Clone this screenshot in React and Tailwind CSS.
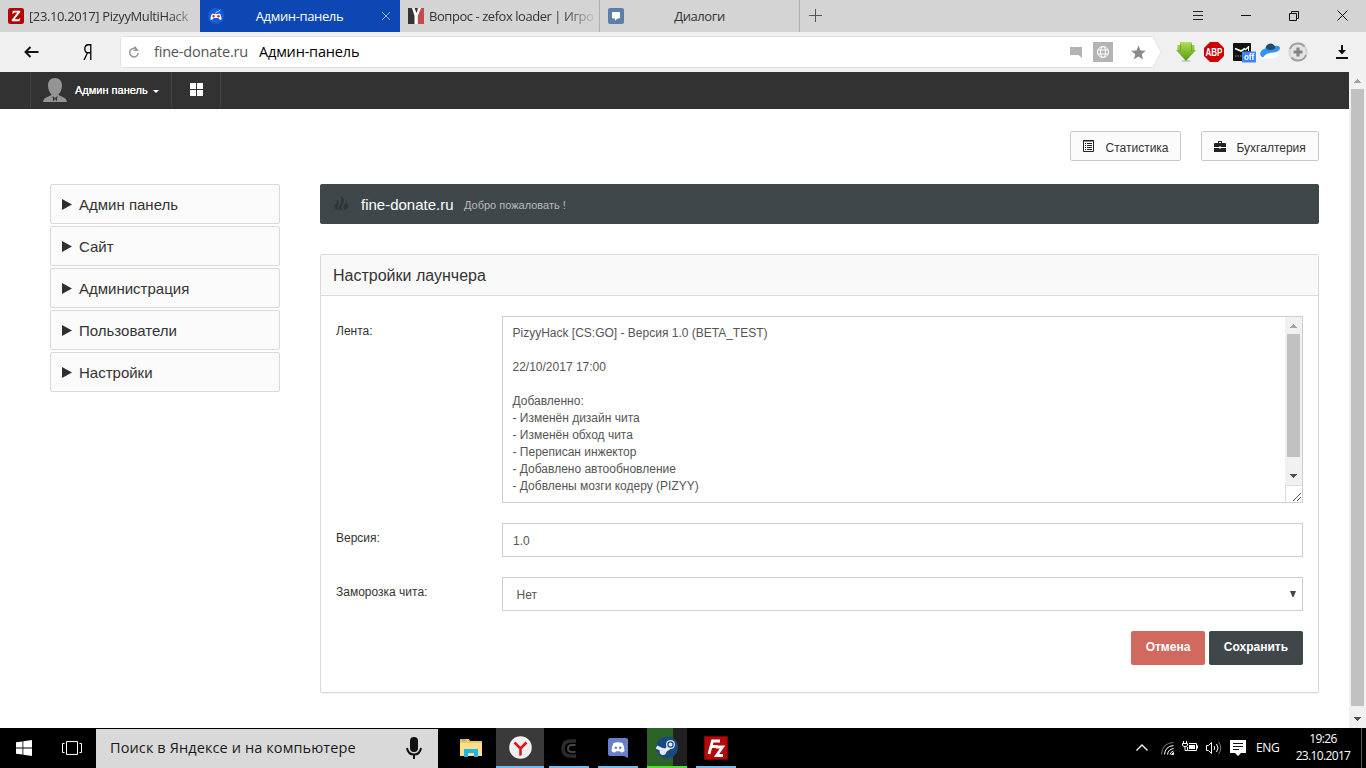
import React from "react";

const SANS = "font-['Liberation_Sans',Arial,sans-serif]";

function Arrow({ up, color }) {
  return (
    <svg width="7" height="4" viewBox="0 0 7 4" shapeRendering="crispEdges" className="block">
      <path
        fill={color}
        d={up ? "M3 0h1v1h1v1h1v1h1v1H0V3h1V2h1V1h1z" : "M0 0h7v1H6v1H5v1H4v1H3V3H2V2H1V1H0z"}
      />
    </svg>
  );
}

function TabBar() {
  return (
    <div className="flex h-8 bg-[#d4d4d4] text-[13px] leading-8 text-[#333]">
      <div className="flex w-[200px] items-center pl-2">
        <svg width="16" height="16" viewBox="0 0 16 16" className="shrink-0">
          <rect width="16" height="16" rx="2.500" fill="#b00507" />
          <path d="M4.800 2.800H12.300V4L6.700 11.300H10.500Q11.300 11.300 11.800 10L12.300 10.200 11.500 13.200H3.700V12L9.300 4.500H6.500Q5.500 4.500 5 6L4.300 5.800z" fill="#fff" />
        </svg>
        <span className="ml-[5px] w-[166px] overflow-hidden whitespace-nowrap font-['Open_Sans',sans-serif] tracking-[-0.38px] [mask-image:linear-gradient(to_right,#000_84%,rgba(0,0,0,0.3)_98%)]">
          [23.10.2017] PizyyMultiHack
        </span>
      </div>
      <div className="flex w-[200px] items-center bg-[#0d47b3] pl-2 text-white">
        <svg width="16" height="16" viewBox="0 0 16 16" className="shrink-0">
          <circle cx="8" cy="8" r="8" fill="#155cdc" />
          <path d="M7.500 5.500C8 3.500 10 4.500 12.300 2" stroke="#fff" strokeWidth=".9" fill="none" />
          <path d="M4.500 5.500Q8 6.500 11.500 5.500Q13.500 7 13.500 11.500Q11.500 12.500 10.200 10H5.800Q4.500 12.500 2.500 11.500Q2.500 7 4.500 5.500z" fill="#fff" />
          <path d="M4.300 8.200h2.600M5.600 7v2.500" stroke="#d22" strokeWidth="1.200" />
          <circle cx="10.500" cy="8.200" r="1.300" fill="#d22" />
        </svg>
        <span className="ml-[5px] w-[141px] text-center font-['Open_Sans',sans-serif] font-medium tracking-[-0.36px]">Админ-панель</span>
        <svg width="10" height="10" viewBox="0 0 10 10" className="ml-[11px]" stroke="#8fb0e8" fill="none">
          <path d="M1 1l8 8M9 1L1 9" />
        </svg>
      </div>
      <div className="flex w-[200px] items-center border-r border-[#b0b0b0] pl-2">
        <svg width="16" height="16" viewBox="0 0 16 16" className="shrink-0">
          <rect width="16" height="16" fill="#c34a4d" />
          <path d="M0 0h9v16H0z" fill="#373435" />
          <path d="M4 0h2.500l2 5 2-5H13L9.800 8v8H6.500V8z" fill="#fff" />
        </svg>
        <span className="ml-[5px] w-[168px] overflow-hidden whitespace-nowrap font-['Open_Sans',sans-serif] tracking-[-0.45px] [mask-image:linear-gradient(to_right,#000_80%,rgba(0,0,0,0.15)_97%)]">
          Вопрос - zefox loader | Игро
        </span>
      </div>
      <div className="flex w-[200px] items-center border-r border-[#b0b0b0] pl-2">
        <svg width="16" height="16" viewBox="0 0 16 16" className="shrink-0">
          <rect width="16" height="16" rx="2" fill="#5b7fa6" />
          <path d="M5 4h6q1 0 1 1v4.500q0 1-1 1H9.500L7 12.800v-2.300H5q-1 0-1-1V5q0-1 1-1z" fill="#fff" />
        </svg>
        <span className="ml-[5px] w-[141px] text-center font-['Open_Sans',sans-serif] tracking-[-0.4px]">Диалоги</span>
      </div>
      <svg width="13" height="13" viewBox="0 0 13 13" className="ml-[9px] mt-[9px]" stroke="#555">
        <path d="M0 6.500h13M6.500 0v13" />
      </svg>
      <div className="ml-auto flex pt-[10px] pr-[18px]">
        <svg width="10" height="11" viewBox="0 0 10 11" className="mr-[38px]" stroke="#222">
          <path d="M0 1.500h10M0 5.500h10M0 9.500h10" />
        </svg>
        <svg width="10" height="11" viewBox="0 0 10 11" className="mr-[38px]" stroke="#111">
          <path d="M0 5.500h10" />
        </svg>
        <svg width="11" height="11" viewBox="0 0 11 11" className="mr-[37px]" stroke="#111" fill="none">
          <path d="M.5 3.500h7v7h-7zM2.500 3.500V1.500h7v7H7.500" />
        </svg>
        <svg width="11" height="11" viewBox="0 0 11 11" stroke="#111" fill="none">
          <path d="M.5 .5l10 10M10.500 .5l-10 10" />
        </svg>
      </div>
    </div>
  );
}

function Toolbar() {
  return (
    <div className="flex h-10 items-center bg-[#f0f0f0]">
      <svg width="15" height="12" viewBox="0 0 15 12" className="ml-6" stroke="#111" strokeWidth="2" fill="none">
        <path d="M14.500 6H2M6.500 1L1.500 6l5 5" />
      </svg>
      <span className="ml-[44px] w-[10px] origin-left scale-x-[0.75] font-['Open_Sans',sans-serif] text-[21px] leading-5 text-black">Я</span>
      <div className="relative ml-[27px] flex h-8 w-[1042px] items-center">
        <svg width="1042" height="32" viewBox="0 0 1042 32" className="absolute inset-0">
          <path d="M.5 2.500q0-2 2-2H1033L1041 16l-8 15.500H2.500q-2 0-2-2z" fill="#fff" stroke="#e2e2e2" />
        </svg>
        <div className="relative flex w-full items-center">
          <svg width="12" height="12" viewBox="0 0 12 12" className="ml-2" fill="none" stroke="#999" strokeWidth="1.500">
            <path d="M9.800 4.500A4.300 4.300 0 1 0 10.300 7M6.500 .5L9.500 4.300H5.500" />
          </svg>
          <span className="ml-[14px] w-[105px] whitespace-nowrap font-['Open_Sans',sans-serif] text-[14.500px] leading-8 tracking-[-0.2px] text-[#555]">fine-donate.ru</span>
          <span className="whitespace-nowrap font-['Open_Sans',sans-serif] text-[14.500px] leading-8 tracking-[-0.18px] text-black">Админ-панель</span>
          <div className="absolute left-[950px] flex items-center">
            <svg width="12" height="11" viewBox="0 0 12 11" fill="#b4b4b4"><path d="M0 0h12v11L8.500 8H0z" /></svg>
            <svg width="20" height="20" viewBox="0 0 20 20" className="ml-[11px]" fill="none" stroke="#fff">
              <rect width="20" height="20" fill="#b4b4b4" stroke="none" />
              <circle cx="10" cy="10" r="5.500" />
              <ellipse cx="10" cy="10" rx="2.500" ry="5.500" />
              <path d="M5 8h10M5 12h10" />
            </svg>
            <svg width="15" height="15" viewBox="0 0 16 15" className="ml-[18px]" fill="#8a8a8a">
              <path d="M8 0l2.100 5.400 5.700.3-4.400 3.600L12.900 15 8 11.800 3.100 15l1.500-5.700L.2 5.700l5.700-.3z" />
            </svg>
          </div>
        </div>
      </div>
      <svg width="20" height="20" viewBox="0 0 20 20" className="ml-[14px]">
        <defs>
          <linearGradient id="dl" x1="0" y1="0" x2="0" y2="1"><stop stopColor="#b2de55" /><stop offset="1" stopColor="#4e9a12" /></linearGradient>
        </defs>
        <ellipse cx="10" cy="19" rx="5" ry="1" fill="#ccc" />
        <path d="M1.500 3H4V0h12v3h2.500v5H20L10 19 0 8h1.500z" fill="url(#dl)" />
        <path d="M4.500 2v7H2.500M15.500 2v7h2" stroke="#5da01c" strokeWidth=".7" fill="none" />
      </svg>
      <svg width="20" height="20" viewBox="0 0 20 20" className="ml-2">
        <path d="M6 0h8l6 6v8l-6 6H6l-6-6V6z" fill="#cc0000" />
        <text x="10" y="13.700" textAnchor="middle" fontSize="10" fontWeight="700" fill="#fff" fontFamily="Liberation Sans" textLength="17" lengthAdjust="spacingAndGlyphs">ABP</text>
      </svg>
      <svg width="24" height="21" viewBox="0 0 24 21" className="ml-[9px]">
        <rect y="1" width="18" height="18" rx="1" fill="#111" />
        <path d="M2 6.500l6 2.500 4-2.500M12 8l4-3.500" stroke="#fff" strokeWidth="1.600" fill="none" />
        <path d="M15.500 4v5" stroke="#fff" />
        <path d="M2 14h7" stroke="#999" strokeDasharray="1.500 1" />
        <rect x="9" y="9.500" width="14" height="11" fill="#4285f4" />
        <text x="16" y="18.200" textAnchor="middle" fontSize="9" fontWeight="700" fill="#fff" fontFamily="Liberation Sans" textLength="10" lengthAdjust="spacingAndGlyphs">off</text>
      </svg>
      <svg width="20" height="16" viewBox="0 0 20 16" className="mb-0.5 ml-[3px]">
        <path d="M1 15.500Q8 8 19 10.500 17 15.500 10 15.500z" fill="#fff" />
        <path d="M14 3q6.500-1 6 2.500Q19 9 13 9.500 6 10 3 14.500 0 13 0 10.500 1 6.500 6 5z" fill="#3195f0" />
        <path d="M5.500 4.500q1.500-4 5.500-4 3.500.5 4.500 4.500-2 2.500-6 2-3-.5-4-2.500z" fill="#244a6e" />
      </svg>
      <svg width="20" height="20" viewBox="0 0 20 20" className="ml-2" fill="none">
        <circle cx="10" cy="10" r="8.500" stroke="#d6d6d6" strokeWidth="2.500" />
        <path d="M2 7Q4 1.500 10 1.500q4 0 6.500 3M18 13q-2 5.500-8 5.500-4 0-6.500-3" stroke="#a0a0a0" strokeWidth="2" />
        <circle cx="10" cy="10" r="7" fill="#e4e4e4" />
        <path d="M10 5.500v9M5.500 10h9" stroke="#858585" strokeWidth="3.200" />
      </svg>
      <svg width="12" height="14" viewBox="0 0 12 14" className="ml-[28px]" fill="#111">
        <path d="M5 0h2v5h3L6 9.500 2 5h3zM0 12h12v2H0z" />
      </svg>
    </div>
  );
}

function AdminNav() {
  return (
    <div className={`flex h-[37px] bg-[#323232] pl-[30px] ${SANS}`}>
      <div className="flex h-[35px] w-[141px] border-l border-[#454545] pl-3 pt-1.5">
        <svg width="24" height="24" viewBox="0 0 24 24" fill="#949494">
          <path d="M12 0c4.500 0 7 3 7 7.500 0 4-1.500 7-3.500 9 .5 2 8 2 8.500 7.500H0c.5-5.500 8-5.500 8.500-7.500-2-2-3.500-5-3.500-9C5 3 7.500 0 12 0z" />
          <path d="M9.500 18L12 20l2.500-2-.8 5h-.7l-1-3-1 3h-.7z" fill="#323232" />
        </svg>
        <span className="ml-2 w-[73px] whitespace-nowrap text-[11px] leading-6 text-white [text-shadow:0_0_0.5px_#fff]">Админ панель</span>
        <svg width="6" height="3" viewBox="0 0 6 3" className="ml-[5px] mt-[12px]" fill="#fff"><path d="M0 0h6L3 3z" /></svg>
      </div>
      <div className="h-[35px] w-[50px] border-x border-[#454545] pl-[18px] pt-[11px]">
        <div className="grid w-[13px] grid-cols-2 gap-px">
          <i className="h-1.5 bg-white" /><i className="h-1.5 bg-white" /><i className="h-1.5 bg-white" /><i className="h-1.5 bg-white" />
        </div>
      </div>
    </div>
  );
}

const SECTIONS = ["Админ панель", "Сайт", "Администрация", "Пользователи", "Настройки"];

function Sidebar() {
  return (
    <div className="flex w-[230px] flex-col gap-0.5">
      {SECTIONS.map((s) => (
        <div key={s} className="flex h-10 items-center rounded-[2px] border border-[#dadada] bg-[#fbfbfb] pl-[11px] text-[15px] leading-5 text-[#333]">
          <svg width="10" height="11" viewBox="0 0 10 11" className="mr-[7px]" fill="#2f2f2f"><path d="M0 0l10 5.500L0 11z" /></svg>
          <span className="pt-[2px]">{s}</span>
        </div>
      ))}
    </div>
  );
}

const LOG = `PizyyHack [CS:GO] - Версия 1.0 (BETA_TEST)

22/10/2017 17:00

Добавленно:
- Изменён дизайн чита
- Изменён обход чита
- Переписан инжектор
- Добавлено автообновление
- Добвлены мозги кодеру (PIZYY)`;

function Settings() {
  return (
    <div className="mt-[30px] h-[439px] rounded-[2px] border border-[#dadada] shadow-[0_1px_1px_rgba(0,0,0,0.06)]">
      <div className="h-[41px] border-b border-[#dadada] bg-[#f9f9f9] pl-3 text-[16px] leading-[41px] text-[#333]">Настройки лаунчера</div>
      <div className="flex flex-col gap-5 px-[15px] pt-5 text-[12px] text-[#333]">
        <div className="flex h-[187px]">
          <div className="w-[166px] pt-[7px] leading-4">Лента:</div>
          <div className="flex flex-1 border border-[#cfcfcf]">
            <div className="flex-1 whitespace-pre pl-[9.5px] pt-[8px] leading-[17px] text-[#555]">{LOG}</div>
            <div className="flex w-[17px] flex-col">
              <div className="flex h-[168px] flex-col items-center bg-[#f1f1f1] pt-[7px]">
                <Arrow up color="#a3a3a3" />
                <div className="mt-[6px] h-[123px] w-[13px] bg-[#c1c1c1]" />
                <div className="mt-[17px]"><Arrow color="#505050" /></div>
              </div>
              <div className="flex flex-1 items-end justify-end border-l border-t border-[#dcdcdc] bg-white p-px">
                <svg width="8" height="8" viewBox="0 0 8 8" stroke="#555"><path d="M0 8l8-8M4 8l4-4" /></svg>
              </div>
            </div>
          </div>
        </div>
        <div className="flex h-[34px]">
          <div className="w-[166px] pt-[7px] leading-4">Версия:</div>
          <div className="flex-1 border border-[#cfcfcf] pl-[10px] pt-px leading-[33px] text-[#555]">1.0</div>
        </div>
        <div className="flex h-[34px]">
          <div className="w-[166px] pt-[7px] leading-4">Заморозка чита:</div>
          <div className="flex flex-1 justify-between border border-[#cfcfcf] pl-[13.5px] pr-[6px] leading-[33px] text-[#555]">
            <span className="pt-px">Нет</span>
            <svg width="6" height="6" viewBox="0 0 6 6" className="mt-[13px]" fill="#444"><path d="M0 0h6L3.500 6h-1z" /></svg>
          </div>
        </div>
        <div className="flex h-[34px] justify-end gap-1 text-center font-bold leading-[32px] text-white">
          <div className="w-[74px] rounded-[2px] bg-[#d2695e]">Отмена</div>
          <div className="w-[94px] rounded-[2px] bg-[#40474a]">Сохранить</div>
        </div>
      </div>
    </div>
  );
}

function Page() {
  return (
    <div className="flex h-[656px]">
      <div className={`flex-1 bg-white ${SANS}`}>
        <AdminNav />
        <div className="flex justify-end gap-5 pr-[30px] pt-[22px] text-[12px] leading-[31px] text-[#333]">
          <div className="flex h-[30px] w-[111px] rounded-[2px] border border-[#c9c9c9] bg-[#fbfbfb] pl-3">
            <svg width="11" height="12" viewBox="0 0 11 12" className="mr-[11.5px] mt-2" fill="none" stroke="#222">
              <path d="M.5 .5h10v11H.5zM0 1h11M2 3.500h1M4 3.500h5M2 5.500h1M4 5.500h5M2 7.500h1M4 7.500h5M2 9.500h1M4 9.500h5" />
            </svg>
            <span className="pt-px">Статистика</span>
          </div>
          <div className="flex h-[30px] w-[118px] rounded-[2px] border border-[#c9c9c9] bg-[#fbfbfb] pl-3">
            <svg width="12" height="11" viewBox="0 0 12 11" className="mr-[10.5px] mt-[9px]" fill="#222">
              <path d="M4 2V0h4v2h3q1 0 1 1v3H7V5.500H5V6H0V3q0-1 1-1zM5 2h2V1H5zM0 7h5v.5h2V7h5v4H0z" />
            </svg>
            <span className="pt-px">Бухгалтерия</span>
          </div>
        </div>
        <div className="flex gap-10 pl-[50px] pr-[30px] pt-[23px]">
          <Sidebar />
          <div className="flex-1">
            <div className="flex h-10 items-center rounded-[2px] bg-[#40474a] pl-[14px]">
              <svg width="15" height="15" viewBox="0 0 15 15" fill="#2f3436" className="mb-px">
                <path d="M7 0c3 2 3.500 4 2.500 6.500-.5 2-2 3-2 4.500 0 1 .3 2 1 3C5 14.500 4 12.500 5 10c1-2 3-3 2.500-5zM2.500 3.500c2.500 1.500 2.500 3.500 1.500 5.500-.7 1.500-.5 3 .5 5C1 13.500 0 11 .5 8.500 2 9.500 3.500 7 2.500 3.500zM12 3.500c.5 1.500 0 2.500-.5 3.500-1 2-2.500 3-2 5 .3 1 .5 1.500 1 2 3.500-1 4.500-4 3.500-6.500-.5.7-1 1-1.500 1 .5-2 .5-3.500-.5-5z" />
              </svg>
              <span className="ml-3 w-[103px] pt-[2px] text-[15px] leading-5 text-white">fine-donate.ru</span>
              <span className="pt-[2px] text-[11px] text-[#bbb]">Добро пожаловать !</span>
            </div>
            <Settings />
          </div>
        </div>
      </div>
      <div className="flex w-[17px] flex-col items-center bg-[#f1f1f1] pt-[7px]">
        <Arrow up color="#a3a3a3" />
        <div className="mt-[6px] h-[617px] w-[13px] bg-[#c1c1c1]" />
        <div className="mt-[11px]"><Arrow color="#505050" /></div>
      </div>
    </div>
  );
}

function Taskbar() {
  return (
    <div className="flex h-10 bg-black font-['Open_Sans',sans-serif]">
      <svg width="16" height="16" viewBox="0 0 16 16" className="ml-4 mt-3" fill="#fff">
        <path d="M0 2.300L6.500 1.400V7.500H0zM7.300 1.300L16 0v7.500H7.300zM0 8.400h6.500v6.200L0 13.700zM7.300 8.400H16V16l-8.700-1.200z" />
      </svg>
      <svg width="20" height="14" viewBox="0 0 20 14" className="ml-[30px] mt-[13px]" fill="none" stroke="#fff">
        <path d="M4.500 .5h11v13h-11zM2.500 2.500h-2v9h2M17.500 2.500h2v9h-2" />
      </svg>
      <div className="ml-[14px] mt-px flex w-[342px] justify-between bg-[#d9d9d9] pl-[14px] pr-4 text-[14.500px] leading-[38px] text-[#1a1a1a]">
        <span className="whitespace-nowrap tracking-[0.11px]">Поиск в Яндексе и на компьютере</span>
        <svg width="16" height="22" viewBox="0 0 16 22" className="mt-2" fill="none" stroke="#111" strokeWidth="2">
          <rect x="4" y="0" width="8" height="15" rx="4" fill="#111" stroke="none" />
          <path d="M1 11q1 6.500 7 6.500T15 11M8 17v5" />
        </svg>
      </div>
      <svg width="22" height="19" viewBox="0 0 22 19" className="ml-[22px] mt-[11px]">
        <path d="M0 1q0-1 1-1h8l1 2h12v15H0z" fill="#f0c85a" />
        <path d="M0 4h22v13H0z" fill="#fbe08c" />
        <path d="M2 1.200h3" stroke="#29a7df" strokeWidth="1" />
        <path d="M4 10h14v8h-4v-4H8v4H4z" fill="#1cb5ee" />
      </svg>
      <div className="ml-[14px] flex w-12 flex-col items-center justify-between border-b-2 border-[#76b9ed] bg-[#3a3a3a] pt-2">
        <svg width="23" height="23" viewBox="0 0 23 23">
          <circle cx="11.500" cy="11.500" r="11.300" fill="#f0f0f0" />
          <path d="M5.500 6.500l6 6 6-6M11.500 12v7.500" stroke="#dc1414" strokeWidth="2.500" fill="none" strokeLinejoin="round" />
        </svg>
      </div>
      <div className="ml-[5px] flex w-10 justify-center border-b-2 border-[#76b9ed] pt-[11px]">
        <svg width="16" height="19" viewBox="0 0 16 19" fill="none">
          <path d="M15 2H10Q2 2 2 9.500T10 17h5" stroke="#2c2c2c" strokeWidth="3.500" />
          <path d="M14.500 6H11Q7 6 7 9.500T11 13h3.500" stroke="#444" strokeWidth="2" />
        </svg>
      </div>
      <div className="ml-[9px] flex w-10 justify-center border-b-2 border-[#76b9ed] pt-[10px]">
        <svg width="20" height="20" viewBox="0 0 20 20">
          <path d="M2 0h16q2 0 2 2v18l-4-2H2q-2 0-2-2V2Q0 0 2 0z" fill="#6b7fc9" />
          <path d="M5.500 5Q10 3.500 14.500 5q2 4 2 8-1.500 1.500-3.500 1.500l-1-1.300H8l-1 1.300q-2 0-3.500-1.500 0-4 2-8z" fill="#fff" />
          <circle cx="7.800" cy="9.800" r="1.300" fill="#6b7fc9" /><circle cx="12.200" cy="9.800" r="1.300" fill="#6b7fc9" />
        </svg>
      </div>
      <div className="ml-[9px] flex w-10 border-b-2 border-[#4be234] bg-[linear-gradient(to_right,#2a6325_26px,#202020_26px)] pl-[9px] pt-2">
        <svg width="22" height="23" viewBox="0 0 22 23">
          <circle cx="11" cy="11.500" r="11" fill="#174b80" />
          <path d="M.5 11l6.500 3" stroke="#e8e8e8" strokeWidth="3.500" fill="none" />
          <circle cx="7" cy="15.500" r="3.400" fill="#e8e8e8" />
          <path d="M8 14l4-5 4 3-6 4z" fill="#e8e8e8" />
          <circle cx="14.500" cy="8.500" r="4.500" fill="#e8e8e8" />
          <circle cx="14.500" cy="8.500" r="2.600" fill="none" stroke="#174b80" strokeWidth="1.200" />
        </svg>
      </div>
      <div className="ml-[9px] flex w-10 justify-center border-b-2 border-[#76b9ed] pt-2">
        <svg width="24" height="24" viewBox="0 0 24 24">
          <rect x=".5" y=".5" width="23" height="23" fill="#b50a0a" stroke="#8c0505" strokeDasharray="1.500 1" />
          <path d="M16 5H8.500L5 18M7.500 10.500h6M12 11h6.500l-6 8.500H19" stroke="#fff" strokeWidth="2.800" fill="none" />
        </svg>
      </div>
      <div className="ml-auto flex text-white">
        <svg width="12" height="7" viewBox="0 0 12 7" className="mt-[16px]" fill="none" stroke="#fff" strokeWidth="1.300"><path d="M.5 6.500L6 1l5.500 5.500" /></svg>
        <svg width="13" height="13" viewBox="0 0 13 13" className="ml-[13px] mt-[14px]" fill="none" stroke="#fff">
          <path d="M.5 12.500Q1 1 12.500 .5" stroke="#777" /><path d="M3.500 12.500Q4 4.500 12.500 3.500M6.500 12.500Q7 7.500 12.500 6.500M9 12.500Q9.500 10 12.500 9" />
          <path d="M10.500 12.500L12.500 10.500v2z" fill="#fff" />
        </svg>
        <svg width="16" height="13" viewBox="0 0 16 13" className="ml-[8px] mt-[13px]" fill="none" stroke="#fff">
          <path d="M1.500 0v2M4.500 0v2M.5 2.500h5v2l-1.500 1H2L.5 4.500zM3 6v3.500h2M7 2.500h7.500v7h-9V6M15.500 4.500v3" /><path d="M7 4h6v4H7z" fill="#fff" stroke="none" />
        </svg>
        <svg width="16" height="14" viewBox="0 0 16 14" className="ml-[8px] mt-[13px]" fill="none" stroke="#fff">
          <path d="M.5 4.500h2L5.500 1.500v11L2.500 9.500h-2zM8 5q1.500 2 0 4M10.500 3q3 4 0 8" /><path d="M12.500 1q4.500 6 0 12" stroke="#777" />
        </svg>
        <svg width="16" height="16" viewBox="0 0 16 16" className="ml-[8px] mt-[12px]">
          <path d="M0 0h16v13h-5l-3 3-3-3H0z" fill="#fff" /><path d="M3 3.500h10M3 6.500h10M3 9.500h6" stroke="#111" />
        </svg>
        <span className="ml-[10px] w-[23px] text-[12px] leading-[39px] tracking-[-0.4px]">ENG</span>
        <div className="ml-[16px] flex w-[56px] flex-col items-center pt-[2px] text-[12px] leading-[17px] tracking-[-0.65px]">
          <span>19:26</span><span className="whitespace-nowrap">23.10.2017</span>
        </div>
        <div className="ml-[10px] mr-1 w-px bg-[#555]" />
      </div>
    </div>
  );
}

export default function App() {
  return (
    <div className="h-[768px] w-[1366px] overflow-hidden">
      <TabBar />
      <Toolbar />
      <Page />
      <Taskbar />
    </div>
  );
}
